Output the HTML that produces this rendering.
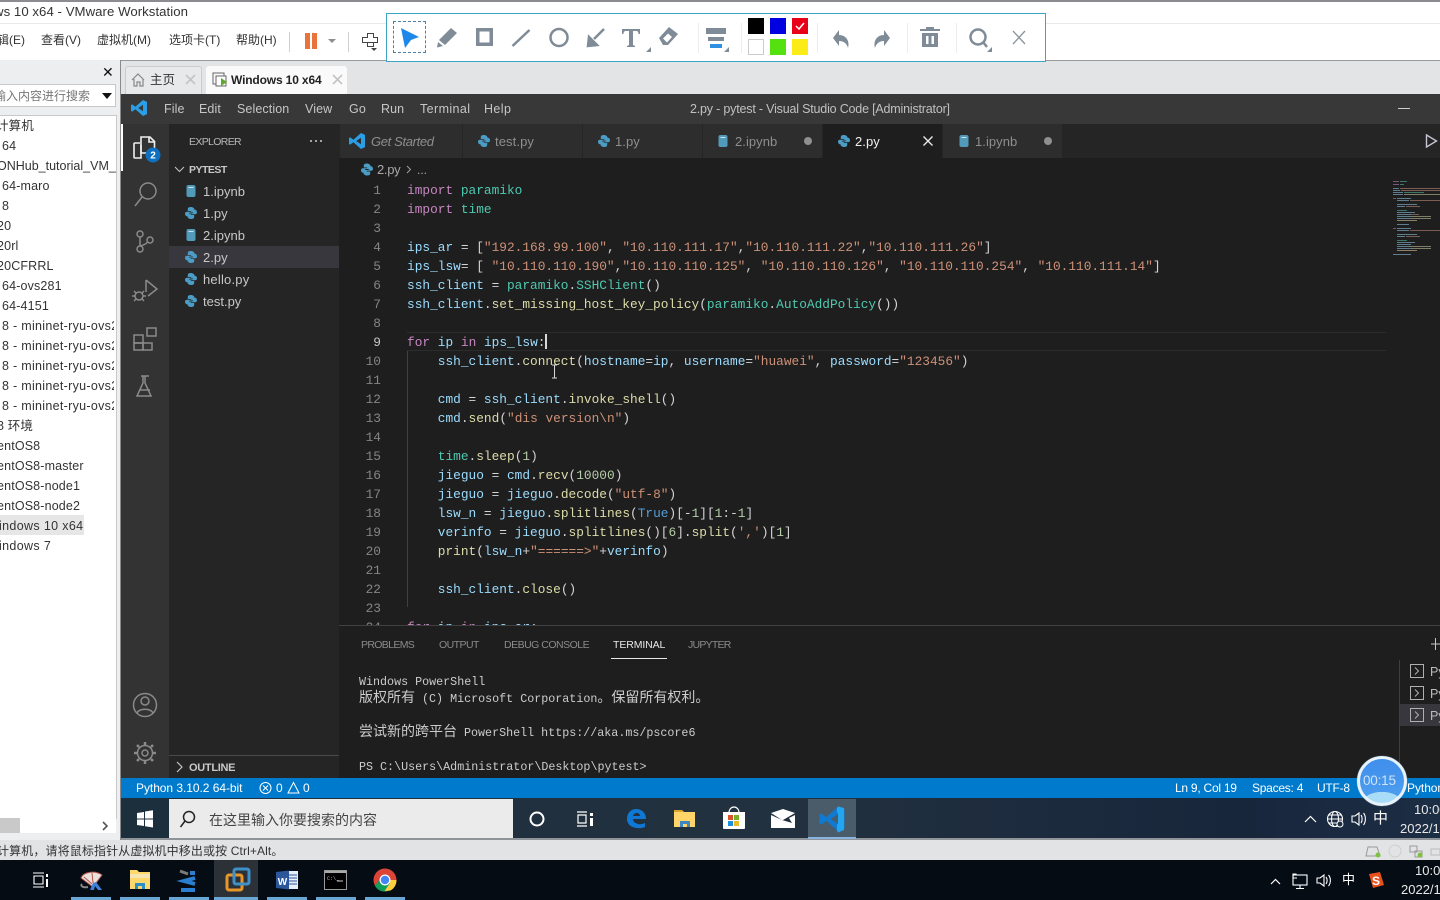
<!DOCTYPE html>
<html lang="zh"><head><meta charset="utf-8"><title>VMware Workstation</title>
<style>
*{box-sizing:border-box}
html,body{margin:0;padding:0;width:1440px;height:900px;overflow:hidden;background:#fff}
body{position:relative;font-family:"Liberation Sans","Noto Sans CJK SC",sans-serif;font-size:13px;color:#222}
.a{position:absolute}
.t{position:absolute;white-space:nowrap;line-height:18px;height:18px}
svg{position:absolute;overflow:visible}
.tree{position:absolute;left:0;top:116px;width:116px;height:702px;background:#fff;overflow:hidden}
.tree div{position:absolute;white-space:nowrap;font-size:12.5px;line-height:20px;height:20px;color:#333;letter-spacing:.15px}
.tree .o{left:2px;width:112px;overflow:hidden;letter-spacing:.3px}
.ex{font-size:13px;color:#c8c8c8;letter-spacing:0}
.tab{position:absolute;top:124px;height:34px;width:119px;background:#2d2d2d}
.tl{position:absolute;top:133px;white-space:nowrap;font-size:13px;line-height:18px;color:#8e8e8e;letter-spacing:.05px}
.menu{position:absolute;top:100px;font-size:12.5px;line-height:18px;color:#c6c6c6;white-space:nowrap;letter-spacing:.1px}
.code{position:absolute;left:340px;top:181px;width:1046px;height:444px;overflow:hidden;font-family:"Liberation Mono",monospace;font-size:12.82px;line-height:19px;color:#d4d4d4}
.code div{position:absolute;left:67px;height:19px;white-space:pre}
.code .l{left:0;width:41px;text-align:right;color:#858585}
.k{color:#c586c0}.v{color:#9cdcfe}.c{color:#4ec9b0}.f{color:#dcdcaa}.s{color:#ce9178}.b{color:#569cd6}.m{color:#b5cea8}
.pt{position:absolute;top:637px;font-size:10.5px;line-height:16px;color:#8b8b8b;white-space:nowrap}
.term{position:absolute;left:359px;font-family:"Liberation Mono","Noto Sans CJK SC",monospace;font-size:11.7px;line-height:17px;height:17px;color:#cccccc;white-space:pre}
.term i{font-style:normal;font-size:14px;font-family:"Noto Sans CJK SC",sans-serif;line-height:17px}
.st{position:absolute;top:780px;font-size:12px;line-height:16px;color:#fff;white-space:nowrap;letter-spacing:-.05px}
.u{position:absolute;top:897px;height:3px;background:#68a6d4}
</style></head><body>

<!-- VMware chrome -->
<div class="a" style="left:0;top:0;width:1440px;height:2px;background:#8c8c90"></div>
<div class="a" style="left:0;top:23px;width:1440px;height:1px;background:#e8e8e8"></div>
<div class="t" style="left:-6px;top:3px;font-size:13.2px;color:#333;letter-spacing:.05px">ws 10 x64 - VMware Workstation</div>
<div class="t" style="left:-3px;top:31px;font-size:12px;color:#333">辑(E)</div>
<div class="t" style="left:41px;top:31px;font-size:12px;color:#333">查看(V)</div>
<div class="t" style="left:97px;top:31px;font-size:12px;color:#333">虚拟机(M)</div>
<div class="t" style="left:169px;top:31px;font-size:12px;color:#333">选项卡(T)</div>
<div class="t" style="left:236px;top:31px;font-size:12px;color:#333">帮助(H)</div>
<div class="a" style="left:289px;top:32px;width:1px;height:20px;background:#d0d0d0"></div>
<div class="a" style="left:305px;top:33px;width:5px;height:16px;background:#e8743b"></div>
<div class="a" style="left:312px;top:33px;width:5px;height:16px;background:#e8743b"></div>
<div class="a" style="left:348px;top:32px;width:1px;height:20px;background:#d0d0d0"></div>
<svg style="left:0;top:0" width="1" height="1"><path d="M328 39h8l-4 4z" fill="#8a8f96"/><path d="M362.500 37.500h5v-4h6v4h4v5h-15zM367.500 42.500v4h6v-4" fill="none" stroke="#444" stroke-width="1"/><path d="M371 48l3 3 3-3z" fill="#444"/></svg>

<!-- left library panel -->
<div class="a" style="left:0;top:60px;width:120px;height:780px;background:#eceeef"></div>
<div class="a" style="left:102px;top:65px;color:#111;font-size:14px;line-height:14px">✕</div>
<div class="a" style="left:0;top:84px;width:116px;height:23px;background:#fff;border:1px solid #c8c8c8;border-left:0"></div>
<div class="t" style="left:-6px;top:87px;font-size:12px;color:#777;width:98px;overflow:hidden">输入内容进行搜索</div>
<svg style="left:0;top:0" width="1" height="1"><path d="M102 93h10l-5 6z" fill="#111"/></svg>
<div class="tree" style="outline:1px solid #c8c8c8">
<div style="left:-4px;top:0">计算机</div>
<div style="left:2px;top:20px">64</div>
<div style="left:-3px;top:40px;letter-spacing:0">ONHub_tutorial_VM_</div>
<div style="left:2px;top:60px">64-maro</div>
<div style="left:2px;top:80px">8</div>
<div style="left:-3px;top:100px">20</div>
<div style="left:-3px;top:120px">20rl</div>
<div style="left:-3px;top:140px">20CFRRL</div>
<div style="left:2px;top:160px">64-ovs281</div>
<div style="left:2px;top:180px">64-4151</div>
<div class="o" style="top:200px">8 - mininet-ryu-ovs2</div>
<div class="o" style="top:220px">8 - mininet-ryu-ovs2</div>
<div class="o" style="top:240px">8 - mininet-ryu-ovs2</div>
<div class="o" style="top:260px">8 - mininet-ryu-ovs2</div>
<div class="o" style="top:280px">8 - mininet-ryu-ovs2</div>
<div style="left:-3px;top:300px">8 环境</div>
<div style="left:-3px;top:320px">entOS8</div>
<div style="left:-3px;top:340px">entOS8-master</div>
<div style="left:-3px;top:360px">entOS8-node1</div>
<div style="left:-3px;top:380px">entOS8-node2</div>
<div style="left:0;top:399px;width:84px;height:20px;background:#e6e6e6"></div>
<div style="left:-1px;top:400px;letter-spacing:.35px">indows 10 x64</div>
<div style="left:-1px;top:420px;letter-spacing:.35px">indows 7</div>
</div>
<div class="a" style="left:0;top:818px;width:116px;height:15px;background:#fff"></div>
<div class="a" style="left:0;top:818px;width:20px;height:15px;background:#c9c9c9"></div>
<svg style="left:0;top:0" width="1" height="1"><path d="M103 822l4 4-4 4" fill="none" stroke="#555" stroke-width="1.6"/></svg>

<!-- gray tabs area -->
<div class="a" style="left:120px;top:60px;width:1320px;height:34px;background:#e2e4e6;border-top:1px solid #9a9a9a"></div>
<div class="a" style="left:120px;top:60px;width:1px;height:780px;background:#8a8a8a"></div>
<div class="a" style="left:125px;top:66px;width:77px;height:28px;background:#e8e9ea;border:1px solid #ccc;border-bottom:0;border-radius:3px 3px 0 0"></div>
<div class="a" style="left:206px;top:66px;width:141px;height:28px;background:#fafafa;border-radius:3px 3px 0 0"></div>
<svg style="left:0;top:0" width="1" height="1"><path d="M132 80l6-6 6 6M134 79v7h3v-4h3v4h3v-7" fill="none" stroke="#888" stroke-width="1.2"/><path d="M186 75l9 9M195 75l-9 9M333 75l9 9M342 75l-9 9" stroke="#c4c4c4" stroke-width="1.6"/><rect x="213" y="73" width="11" height="11" fill="none" stroke="#666"/><rect x="216" y="76" width="10" height="10" fill="#fff" stroke="#666"/><path d="M221 78l6 4-6 4z" fill="#62a82c"/></svg>
<div class="t" style="left:150px;top:71px;font-size:12.5px;color:#333">主页</div>
<div class="t" style="left:231px;top:71px;font-size:12px;font-weight:700;color:#222;letter-spacing:-.15px">Windows 10 x64</div>

<!-- VS Code title -->
<div class="a" style="left:121px;top:94px;width:1319px;height:30px;background:#383838"></div>
<svg style="left:0;top:0" width="1" height="1">
<defs>
<path id="vsp" d="M5-10 -4.500-1.500 -8.500-4.500 -10-3.700V3.700L-8.500 4.500 -4.500 1.500 5 10 10 7.600V-7.600zM5-4 -1 0 5 4z" fill-rule="evenodd"/>
<g id="py"><path id="pyh" d="M-.2-6c-3 0-3 1.500-3 2.500V-2H.2v.7H-4C-5.500-1.300-6 0-6 .2c0 2.200 1 3 2.200 3H-2.500V1.500C-2.500.3-1.500-.5-.5-.5h3C3.500-.5 3.500-1.500 3.500-2V-3.500C3.500-5 1.500-6-.2-6z" fill="#4b9dc6"/><use href="#pyh" transform="rotate(180)"/></g>
<g id="nb"><rect x="-4.500" y="-6" width="9" height="12" rx="2" fill="#519aba"/><path d="M-2.500-3.500h5" stroke="#cfe3ee" stroke-width="1"/></g>
</defs>
<use href="#vsp" transform="translate(139 108) scale(.8)" fill="#2a9fe8"/></svg>
<div class="menu" style="left:164px">File</div><div class="menu" style="left:199px">Edit</div><div class="menu" style="left:237px">Selection</div><div class="menu" style="left:305px">View</div><div class="menu" style="left:349px">Go</div><div class="menu" style="left:381px">Run</div><div class="menu" style="left:420px;letter-spacing:.4px">Terminal</div><div class="menu" style="left:484px;letter-spacing:.4px">Help</div>
<div class="menu" style="left:690px;color:#c0c0c0;letter-spacing:-.19px">2.py - pytest - Visual Studio Code [Administrator]</div>
<div class="a" style="left:1398px;top:108px;width:12px;height:1px;background:#ccc"></div>

<!-- activity bar -->
<div class="a" style="left:121px;top:124px;width:48px;height:654px;background:#333333"></div>
<div class="a" style="left:121px;top:124px;width:2px;height:47px;background:#fff"></div>
<svg style="left:0;top:0" width="1" height="1">
<g fill="none" stroke="#f0f0f0" stroke-width="1.600"><path d="M141 145v13h-6a1 1 0 0 1-1-1v-13a1 1 0 0 1 1-1h5"/><path d="M141 137h9l4.500 4.500V153h-13.500z"/><path d="M149 137v5h5"/></g>
<circle cx="153" cy="155" r="7.500" fill="#0e70c0"/><text x="153" y="158.500" fill="#fff" font-size="10" font-weight="700" text-anchor="middle" font-family="Liberation Sans">2</text>
<g fill="none" stroke="#8a8a8a" stroke-width="1.500">
<circle cx="148" cy="191" r="8"/><path d="M142 197l-7 9"/>
<circle cx="140" cy="234" r="3"/><circle cx="140" cy="249" r="3"/><circle cx="150" cy="240" r="3"/><path d="M140 237v9M147.500 242c-2 3-5 3-7 4"/>
<path d="M146 280v12M146 280l11 9-9 7"/><circle cx="139" cy="296" r="4"/><path d="M132 296h3M143 296h3M134 291l2 2M144 291l-2 2M134 301l2-2M144 301l-2-2"/>
<rect x="134" y="335" width="9" height="8"/><rect x="134" y="343" width="9" height="7"/><rect x="143" y="343" width="9" height="7"/><rect x="147" y="328" width="9" height="8"/>
<path d="M141 376h8M143 376v7l-6 13h14l-6-13v-7M140 390h10"/>
<circle cx="145" cy="705" r="11.500"/><circle cx="145" cy="701" r="4"/><path d="M137 713c2-5 14-5 16 0"/>
<circle cx="145" cy="753" r="3"/><circle cx="145" cy="753" r="7.500"/><path d="M145 742v3M145 761v3M134 753h3M153 753h3M137 745l2 2M151 759l2 2M137 761l2-2M151 747l2-2" stroke-width="2.500"/>
</g></svg>

<!-- sidebar -->
<div class="a" style="left:169px;top:124px;width:170px;height:654px;background:#252526"></div>
<div class="t" style="left:189px;top:133px;font-size:10.5px;color:#b8b8b8;letter-spacing:-.65px">EXPLORER</div>
<svg style="left:0;top:0" width="1" height="1"><g fill="#ccc"><circle cx="311" cy="141" r="1"/><circle cx="316" cy="141" r="1"/><circle cx="321" cy="141" r="1"/></g><path d="M175 167l4.500 4.500L184 167" fill="none" stroke="#c5c5c5" stroke-width="1"/></svg>
<div class="t" style="left:189px;top:161px;font-size:10.5px;font-weight:700;color:#c8c8c8;letter-spacing:-.5px">PYTEST</div>
<div class="a" style="left:169px;top:246px;width:170px;height:22px;background:#37373d"></div>
<svg style="left:0;top:0" width="1" height="1">
<use href="#nb" x="191" y="191"/><use href="#py" x="191" y="213"/><use href="#nb" x="191" y="235"/><use href="#py" x="191" y="257"/><use href="#py" x="191" y="279"/><use href="#py" x="191" y="301"/>
</svg>
<div class="t ex" style="left:203px;top:183px">1.ipynb</div>
<div class="t ex" style="left:203px;top:205px">1.py</div>
<div class="t ex" style="left:203px;top:227px">2.ipynb</div>
<div class="t ex" style="left:203px;top:249px">2.py</div>
<div class="t ex" style="left:203px;top:271px;letter-spacing:.2px">hello.py</div>
<div class="t ex" style="left:203px;top:293px">test.py</div>
<div class="a" style="left:169px;top:755px;width:170px;height:1px;background:#4a4a4a"></div>
<svg style="left:0;top:0" width="1" height="1"><path d="M177 762l5 5-5 5" fill="none" stroke="#c5c5c5" stroke-width="1.200"/></svg>
<div class="t" style="left:189px;top:759px;font-size:11px;font-weight:700;color:#c8c8c8;letter-spacing:-.3px">OUTLINE</div>

<!-- editor -->
<div class="a" style="left:339px;top:124px;width:1101px;height:654px;background:#1e1e1e"></div>
<div class="a" style="left:339px;top:124px;width:1101px;height:34px;background:#252526"></div>
<div class="tab" style="left:340px;width:122px"></div><div class="tab" style="left:463px"></div><div class="tab" style="left:583px"></div><div class="tab" style="left:703px"></div><div class="tab" style="left:823px;background:#1e1e1e"></div><div class="tab" style="left:943px"></div>
<svg style="left:0;top:0" width="1" height="1">
<use href="#vsp" transform="translate(357 141) scale(.8)" fill="#2a9fe8"/>
<use href="#py" x="484" y="141"/><use href="#py" x="604" y="141"/><use href="#nb" x="723" y="141"/><use href="#py" x="844" y="141"/><use href="#nb" x="964" y="141"/>
<circle cx="808" cy="141" r="4" fill="#8f8f8f"/><circle cx="1048" cy="141" r="4" fill="#8f8f8f"/>
<path d="M923.500 136.500l9 9M932.500 136.500l-9 9" stroke="#e8e8e8" stroke-width="1.400"/>
<path d="M1426.500 135v12l10-6z" fill="none" stroke="#c5c5d5" stroke-width="1.400"/>
<use href="#py" x="367" y="169.500"/><path d="M407 166l3.500 3.500-3.500 3.500" fill="none" stroke="#a0a0a0"/>
<path d="M407.500 351v256" stroke="#404040"/>
</svg>
<div class="tl" style="left:371px;font-style:italic;letter-spacing:-.35px">Get Started</div>
<div class="tl" style="left:495px;letter-spacing:.1px">test.py</div>
<div class="tl" style="left:615px">1.py</div>
<div class="tl" style="left:735px;letter-spacing:.05px">2.ipynb</div>
<div class="tl" style="left:855px;color:#f0f0f0">2.py</div>
<div class="tl" style="left:975px;letter-spacing:.05px">1.ipynb</div>
<div class="t" style="left:377px;top:161px;font-size:13px;color:#a8a8a8;letter-spacing:-.3px">2.py</div>
<div class="t" style="left:417px;top:161px;font-size:12px;color:#a8a8a8">...</div>
<div class="a" style="left:407px;top:332px;width:979px;height:19px;border:1px solid #2c2c2c;border-width:1px 0"></div>
<div class="code">
<div class="l" style="top:0">1</div><div style="top:0"><span class="k">import</span> <span class="c">paramiko</span></div>
<div class="l" style="top:19px">2</div><div style="top:19px"><span class="k">import</span> <span class="c">time</span></div>
<div class="l" style="top:38px">3</div>
<div class="l" style="top:57px">4</div><div style="top:57px"><span class="v">ips_ar</span> = [<span class="s">"192.168.99.100"</span>, <span class="s">"10.110.111.17"</span>,<span class="s">"10.110.111.22"</span>,<span class="s">"10.110.111.26"</span>]</div>
<div class="l" style="top:76px">5</div><div style="top:76px"><span class="v">ips_lsw</span>= [ <span class="s">"10.110.110.190"</span>,<span class="s">"10.110.110.125"</span>, <span class="s">"10.110.110.126"</span>, <span class="s">"10.110.110.254"</span>, <span class="s">"10.110.111.14"</span>]</div>
<div class="l" style="top:95px">6</div><div style="top:95px"><span class="v">ssh_client</span> = <span class="c">paramiko</span>.<span class="c">SSHClient</span>()</div>
<div class="l" style="top:114px">7</div><div style="top:114px"><span class="v">ssh_client</span>.<span class="f">set_missing_host_key_policy</span>(<span class="c">paramiko</span>.<span class="c">AutoAddPolicy</span>())</div>
<div class="l" style="top:133px">8</div>
<div class="l" style="top:152px;color:#c6c6c6">9</div><div style="top:152px"><span class="k">for</span> <span class="v">ip</span> <span class="k">in</span> <span class="v">ips_lsw</span>:</div>
<div class="l" style="top:171px">10</div><div style="top:171px">    <span class="v">ssh_client</span>.<span class="f">connect</span>(<span class="v">hostname</span>=<span class="v">ip</span>, <span class="v">username</span>=<span class="s">"huawei"</span>, <span class="v">password</span>=<span class="s">"123456"</span>)</div>
<div class="l" style="top:190px">11</div>
<div class="l" style="top:209px">12</div><div style="top:209px">    <span class="v">cmd</span> = <span class="v">ssh_client</span>.<span class="f">invoke_shell</span>()</div>
<div class="l" style="top:228px">13</div><div style="top:228px">    <span class="v">cmd</span>.<span class="f">send</span>(<span class="s">"dis version\n"</span>)</div>
<div class="l" style="top:247px">14</div>
<div class="l" style="top:266px">15</div><div style="top:266px">    <span class="c">time</span>.<span class="f">sleep</span>(<span class="m">1</span>)</div>
<div class="l" style="top:285px">16</div><div style="top:285px">    <span class="v">jieguo</span> = <span class="v">cmd</span>.<span class="f">recv</span>(<span class="m">10000</span>)</div>
<div class="l" style="top:304px">17</div><div style="top:304px">    <span class="v">jieguo</span> = <span class="v">jieguo</span>.<span class="f">decode</span>(<span class="s">"utf-8"</span>)</div>
<div class="l" style="top:323px">18</div><div style="top:323px">    <span class="v">lsw_n</span> = <span class="v">jieguo</span>.<span class="f">splitlines</span>(<span class="b">True</span>)[-<span class="m">1</span>][<span class="m">1</span>:-<span class="m">1</span>]</div>
<div class="l" style="top:342px">19</div><div style="top:342px">    <span class="v">verinfo</span> = <span class="v">jieguo</span>.<span class="f">splitlines</span>()[<span class="m">6</span>].<span class="f">split</span>(<span class="s">','</span>)[<span class="m">1</span>]</div>
<div class="l" style="top:361px">20</div><div style="top:361px">    <span class="f">print</span>(<span class="v">lsw_n</span>+<span class="s">"======&gt;"</span>+<span class="v">verinfo</span>)</div>
<div class="l" style="top:380px">21</div>
<div class="l" style="top:399px">22</div><div style="top:399px">    <span class="v">ssh_client</span>.<span class="f">close</span>()</div>
<div class="l" style="top:418px">23</div>
<div class="l" style="top:437px">24</div><div style="top:437px"><span class="k">for</span> <span class="v">ip</span> <span class="k">in</span> <span class="v">ips_ar</span>:</div>
</div>
<div class="a" style="left:545px;top:334px;width:2px;height:15px;background:#d8d8d8"></div>
<svg style="left:0;top:0" width="1" height="1"><path d="M552 365h5M552 378h5M554.500 365v13" stroke="#d8d8d8" stroke-width="1"/>
<!-- minimap -->
<g stroke-width="1" opacity=".7">
<path d="M1393 181.500h6" stroke="#9a6f98"/><path d="M1400 181.500h7" stroke="#4c9c88"/>
<path d="M1393 184.500h6" stroke="#9a6f98"/><path d="M1400 184.500h4" stroke="#4c9c88"/>
<path d="M1393 188.500h6" stroke="#7da6bd"/><path d="M1400 188.500h40" stroke="#a5786a"/>
<path d="M1393 190.500h7" stroke="#7da6bd"/><path d="M1401 190.500h39" stroke="#a5786a"/>
<path d="M1393 192.500h10" stroke="#7da6bd"/><path d="M1404 192.500h20" stroke="#4c9c88"/>
<path d="M1393 194.500h10" stroke="#7da6bd"/><path d="M1404 194.500h36" stroke="#a8a888"/>
<path d="M1393 198.500h3" stroke="#9a6f98"/><path d="M1397 198.500h14" stroke="#7da6bd"/>
<path d="M1397 200.500h12" stroke="#7da6bd"/><path d="M1410 200.500h30" stroke="#a5786a"/>
<path d="M1397 204.500h20" stroke="#7da6bd"/><path d="M1397 206.500h8" stroke="#7da6bd"/><path d="M1406 206.500h14" stroke="#a5786a"/>
<path d="M1397 210.500h10" stroke="#4c9c88"/><path d="M1397 212.500h18" stroke="#7da6bd"/><path d="M1397 214.500h14" stroke="#7da6bd"/><path d="M1411 214.500h8" stroke="#a5786a"/>
<path d="M1397 216.500h12" stroke="#7da6bd"/><path d="M1409 216.500h22" stroke="#a8a888"/><path d="M1397 218.500h14" stroke="#7da6bd"/><path d="M1411 218.500h20" stroke="#a8a888"/><path d="M1397 220.500h20" stroke="#b8a888"/>
<path d="M1397 224.500h12" stroke="#7da6bd"/>
<path d="M1393 228.500h3" stroke="#9a6f98"/><path d="M1397 228.500h14" stroke="#7da6bd"/>
<path d="M1397 230.500h12" stroke="#7da6bd"/><path d="M1410 230.500h30" stroke="#a5786a"/>
<path d="M1397 234.500h20" stroke="#7da6bd"/><path d="M1397 236.500h8" stroke="#7da6bd"/><path d="M1406 236.500h14" stroke="#a5786a"/>
<path d="M1397 240.500h10" stroke="#4c9c88"/><path d="M1397 242.500h18" stroke="#7da6bd"/><path d="M1397 244.500h14" stroke="#7da6bd"/>
<path d="M1397 246.500h12" stroke="#7da6bd"/><path d="M1409 246.500h22" stroke="#a8a888"/><path d="M1397 248.500h14" stroke="#7da6bd"/><path d="M1411 248.500h20" stroke="#a8a888"/><path d="M1397 250.500h20" stroke="#b8a888"/>
<path d="M1393 254.500h18" stroke="#7da6bd"/>
</g></svg>

<!-- panel -->
<div class="a" style="left:339px;top:625px;width:1101px;height:153px;background:#1e1e1e;border-top:1px solid #414141"></div>
<div class="pt" style="left:361px;letter-spacing:-.65px">PROBLEMS</div><div class="pt" style="left:439px;letter-spacing:-.55px">OUTPUT</div><div class="pt" style="left:504px;letter-spacing:-.5px">DEBUG CONSOLE</div><div class="pt" style="left:613px;color:#e7e7e7;letter-spacing:-.1px">TERMINAL</div><div class="pt" style="left:688px;letter-spacing:-.75px">JUPYTER</div>
<div class="a" style="left:611px;top:658px;width:56px;height:1px;background:#e7e7e7"></div>
<div class="term" style="top:674px">Windows PowerShell</div>
<div class="term" style="top:689px"><i>版权所有</i> (C) Microsoft Corporation<i>。保留所有权利。</i></div>
<div class="term" style="top:723px"><i>尝试新的跨平台</i> PowerShell https://aka.ms/pscore6</div>
<div class="term" style="top:759px">PS C:\Users\Administrator\Desktop\pytest&gt;</div>
<div class="a" style="left:1399px;top:660px;width:1px;height:118px;background:#3e3e3e"></div>
<div class="a" style="left:1400px;top:704px;width:40px;height:22px;background:#37373d"></div>
<svg style="left:0;top:0" width="1" height="1"><g fill="none" stroke="#b0b0b0"><rect x="1410.500" y="664.500" width="13" height="13"/><path d="M1415 667.500l3.500 3.500-3.500 3.500"/><rect x="1410.500" y="686.500" width="13" height="13"/><path d="M1415 689.500l3.500 3.500-3.500 3.500"/><rect x="1410.500" y="708.500" width="13" height="13"/><path d="M1415 711.500l3.500 3.500-3.500 3.500"/></g><path d="M1431 644h9M1435.500 638v12" stroke="#c5c5c5"/></svg>
<div class="t" style="left:1430px;top:663px;font-size:12.500px;color:#bbb">Py</div>
<div class="t" style="left:1430px;top:685px;font-size:12.500px;color:#bbb">Py</div>
<div class="t" style="left:1430px;top:707px;font-size:12.500px;color:#bbb">Py</div>

<!-- status bar -->
<div class="a" style="left:121px;top:778px;width:1319px;height:20px;background:#007acc"></div>
<div class="st" style="left:136px">Python 3.10.2 64-bit</div>
<svg style="left:0;top:0" width="1" height="1"><g fill="none" stroke="#fff"><circle cx="265.500" cy="788" r="5.500"/><path d="M263 785.500l5 5M268 785.500l-5 5M293.500 782.500l5.500 10.500h-11z"/></g></svg>
<div class="st" style="left:276px">0</div><div class="st" style="left:303px">0</div>
<div class="st" style="left:1175px;letter-spacing:-.25px">Ln 9, Col 19</div><div class="st" style="left:1252px;letter-spacing:-.25px">Spaces: 4</div><div class="st" style="left:1317px;letter-spacing:-.25px">UTF-8</div><div class="st" style="left:1407px">Python</div>

<!-- guest taskbar -->
<div class="a" style="left:121px;top:798px;width:1319px;height:40px;background:linear-gradient(90deg,#1c2f3c,#22313f 50%,#18263c 85%,#1c2e44)"></div>
<div class="a" style="left:121px;top:838px;width:1319px;height:2px;background:#8f9498"></div>
<div class="a" style="left:169px;top:799px;width:344px;height:39px;background:#ebebeb"></div>
<svg style="left:0;top:0" width="1" height="1">
<path d="M137 813l7-1v6.500h-7zM145 811.500l8-1.200v8.200h-8zM137 819.500h7v6.500l-7-1zM145 819.500h8v8l-8-1.200z" fill="#fff"/>
<circle cx="189" cy="817" r="5.500" fill="none" stroke="#222" stroke-width="1.500"/><path d="M185 821l-4.500 6" stroke="#222" stroke-width="1.500"/>
<circle cx="537" cy="819" r="6.500" fill="none" stroke="#fff" stroke-width="2"/>
<path d="M577 812h10M577 826h10M578 815h8v8h-8z" fill="none" stroke="#fff" stroke-width="1.200"/><path d="M590 813h3v3h-3zM590 818h3v8h-3z" fill="#fff"/>
<path d="M627 819c0-6 4-10 9-10 6 0 10 4 10 10h-13c0 4 6 7 12 4v4c-8 3-18 0-18-8zM633 816h7c0-4-6-4-7 0z" fill="#0f78d4" fill-rule="evenodd"/>
<path d="M674 810h8l2 2h11v15h-21z" fill="#ffd469"/><path d="M674 810h8l2 2h-10z" fill="#d9a52b"/><path d="M680 827v-6h10v6h-3v-3h-4v3z" fill="#3f87c2"/>
<path d="M723 812h22v16a1 1 0 0 1-1 1h-20a1 1 0 0 1-1-1z" fill="#fff"/><path d="M729 813c0-8 10-8 10 0" fill="none" stroke="#fff" stroke-width="1.200"/><rect x="728" y="815" width="5" height="5" fill="#d8552a"/><rect x="734" y="815" width="5" height="5" fill="#7bb02c"/><rect x="728" y="821" width="5" height="5" fill="#1d8fd8"/><rect x="734" y="821" width="5" height="5" fill="#e9b92a"/>
<path d="M771 813l12-4 12 4-12 7-1 0zM771 815v13h24v-13l-6 3 3 5-10-3z" fill="#fff"/>
</svg>
<div class="a" style="left:808px;top:799px;width:48px;height:39px;background:#4a5c6a"></div>
<div class="a" style="left:808px;top:837px;width:48px;height:2px;background:#8ab4e0"></div>
<svg style="left:0;top:0" width="1" height="1"><use href="#vsp" transform="translate(832 819) scale(1.250)" fill="#0f7ad0"/><path d="M838 806.500l6 1.500 0 22-6 2.500-1-2v-6.500l1 .5v-12l-1 .5v-5z" fill="#22a6f0"/>
<path d="M1305 822l5.500-5.500 5.500 5.500" fill="none" stroke="#fff" stroke-width="1.200"/>
<g fill="none" stroke="#fff" stroke-width="1.100"><circle cx="1335" cy="819" r="7.500"/><ellipse cx="1335" cy="819" rx="3.500" ry="7.500"/><path d="M1327.500 819h15M1329 815h12M1329 823h12"/>
<path d="M1352 816h3l4-3v12l-4-3h-3zM1361 815c1.500 2 1.500 6 0 8M1363.500 813c2.500 3 2.500 9 0 12"/></g>
<circle cx="1340" cy="824" r="3" fill="#1c2e44" stroke="#fff"/>
</svg>
<div class="t" style="left:209px;top:811px;font-size:14px;color:#444">在这里输入你要搜索的内容</div>
<div class="t" style="left:1373px;top:810px;font-size:15px;color:#fff">中</div>
<div class="t" style="left:1414px;top:801px;font-size:13px;color:#e8e8e8">10:00</div>
<div class="t" style="left:1400px;top:820px;font-size:13px;color:#e8e8e8">2022/1</div>

<!-- timer -->
<div class="a" style="left:1357px;top:756px;width:50px;height:50px;border-radius:50%;border:3px solid #e8f2fb;background:radial-gradient(ellipse 38px 24px at 50% 105%,#a9dcf7 55%,transparent 56%),linear-gradient(#3e8eec,#4f9ff0);box-shadow:0 0 1px #7ab"></div>
<div class="t" style="left:1363px;top:772px;font-size:13.500px;color:#cfe4f5;letter-spacing:-.2px">00:15</div>

<!-- VM status bar -->
<div class="a" style="left:0;top:840px;width:1440px;height:20px;background:#e2e3e4"></div>
<div class="t" style="left:-3px;top:842px;font-size:12px;color:#333;letter-spacing:.12px">计算机，请将鼠标指针从虚拟机中移出或按 Ctrl+Alt。</div>
<svg style="left:0;top:0" width="1" height="1"><g fill="none" stroke="#9a9a9a"><path d="M1366 856l2-9h9l3 9zM1366 856h14"/><circle cx="1395" cy="851" r="6" stroke="#cfcfcf"/><rect x="1410" y="846" width="7" height="6"/><rect x="1415" y="851" width="7" height="6"/><path d="M1431 849h9v6h-9z" stroke="#bbb"/></g><circle cx="1378" cy="855" r="2.500" fill="#7ec040"/><circle cx="1420" cy="855" r="2.500" fill="#7ec040"/></svg>

<!-- host taskbar -->
<div class="a" style="left:0;top:860px;width:1440px;height:40px;background:#050c14"></div>
<div class="a" style="left:214px;top:860px;width:44px;height:40px;background:#2c3138"></div>
<div class="u" style="left:71px;width:40px"></div><div class="u" style="left:120px;width:40px"></div><div class="u" style="left:169px;width:40px"></div><div class="u" style="left:214px;width:44px"></div><div class="u" style="left:267px;width:40px"></div><div class="u" style="left:316px;width:40px"></div><div class="u" style="left:365px;width:40px"></div>
<svg style="left:0;top:0" width="1" height="1">
<path d="M33 873h11M33 887h11M34 876h9v8h-9z" fill="none" stroke="#fff" stroke-width="1.100"/><path d="M46 874h2v3h-2zM46 879h2v8h-2z" fill="#fff"/>
<path d="M81 878c2-6 14-8 21-3l-9 12z" fill="#e9e1dc" stroke="#b5524a"/><path d="M84 877l8 7M92 873l1 10" stroke="#b5524a"/><path d="M93 883l-3 7h4l1-4 3 4h4l-6-8z" fill="#3d82d8"/><path d="M82 884c-2 2 1 4 6 3" stroke="#888" stroke-width="2" fill="none"/>
<path d="M130 870h7l2 2h11v17h-20z" fill="#ffd86b"/><path d="M130 878h20v-4h-20z" fill="#f5e5b0"/><path d="M135 889v-6h10v6h-3v-3h-4v3z" fill="#2d8fc8"/>
<path d="M180 871l8 3" stroke="#7a7a7a" stroke-width="3"/><path d="M190 873h5M195 878l-11 3 11 3M181 890h14" fill="none" stroke="#2a7fd0" stroke-width="4"/>
<rect x="227" y="875" width="15" height="15" rx="2" fill="none" stroke="#e8952a" stroke-width="3"/><rect x="234" y="869" width="15" height="15" rx="2" fill="none" stroke="#3f90c8" stroke-width="3"/>
<path d="M286 871h12v18h-12z" fill="#e8eef8"/><path d="M288 875h9M288 878h9M288 881h9M288 884h9" stroke="#2b579a"/><path d="M276 872l13-1.500v19l-13-1.500z" fill="#2b579a"/><text x="282.500" y="885" fill="#fff" font-size="10" font-weight="700" text-anchor="middle" font-family="Liberation Sans">W</text>
<rect x="324.500" y="870.500" width="22" height="19" fill="#000" stroke="#999"/><path d="M325 871h21v2h-21z" fill="#aaa"/><text x="327" y="880" fill="#bbb" font-size="5" font-family="Liberation Mono">C:\_</text><path d="M337 881h6" stroke="#ccc"/>
<circle cx="385" cy="880" r="11.500" fill="#db4437"/><path d="M385 880l10 5.500a11.500 11.500 0 0 1-10 6 11.500 11.500 0 0 1-10-5.500l5-7z" fill="#0f9d58"/><path d="M385 880h11.500a11.500 11.500 0 0 1-6 10.500l-6 .5 5.500-8z" fill="#ffcd40"/><circle cx="385" cy="880" r="5.500" fill="#fff"/><circle cx="385" cy="880" r="4.200" fill="#4285f4"/>
<path d="M1271 884l4.500-4.500 4.500 4.500" fill="none" stroke="#fff" stroke-width="1.200"/>
<g fill="none" stroke="#fff" stroke-width="1.100"><rect x="1293" y="875" width="14" height="10"/><path d="M1296 875v-1h-3v4h4M1300 885v3M1296 888.500h8"/><path d="M1317 878h3l4-3v11l-4-3h-3zM1326 877c1.500 2 1.500 5 0 7M1328.500 875c2.500 3 2.500 8 0 11"/></g>
<path d="M1369 874l11-2 4 13-11 3z" fill="#e8501e"/><text x="1376" y="885" fill="#fff" font-size="12" font-weight="700" text-anchor="middle" font-family="Liberation Sans">S</text>
</svg>
<div class="t" style="left:1342px;top:871px;font-size:13px;color:#fff">中</div>
<div class="t" style="left:1415px;top:862px;font-size:13px;color:#e8e8e8">10:00</div>
<div class="t" style="left:1401px;top:881px;font-size:13px;color:#e8e8e8">2022/1</div>

<!-- capture toolbar -->
<div class="a" style="left:386px;top:13px;width:660px;height:49px;background:#fff;border:1px solid #3da4c4"></div>
<div class="a" style="left:393px;top:21px;width:33px;height:32px;border:1px dashed #4a7fa8"></div>
<svg style="left:0;top:0" width="1" height="1">
<path d="M401 28l18 9-8 3-6 8z" fill="#1e88ea"/>
<g fill="#7f8b97">
<path d="M451 28l6 5-12 12-6-5zM438 42l5 4-6 1.500z"/>
<path d="M476 28h17v18h-17zM479.500 31.500v11h10v-11z" fill-rule="evenodd"/>
<path d="M659 38l10-11 9 7-10 11-5 0zM663 38.500l4 4 5-5.500-4-3.500z" fill-rule="evenodd"/>
<path d="M622 29h18v5h-1.500c0-2-1-3-2-3H633v14l2 1v1h-8v-1l2-1V31h-3.500c-1 0-2 1-2 3H622z"/>
<path d="M706 28h20v6h-20zM708 37h16v4h-16z"/>
<path d="M833 38l6-8v5c7 0 11 6 9 13-1-4-4-7-9-7v5z"/>
<path d="M890 38l-6-8v5c-7 0-11 6-9 13 1-4 4-7 9-7v5z"/>
<path d="M926 29v-2h8v2h6v2h-20v-2zM922 33h16v14h-16zM926 36v8h2.500v-8zM931.500 36v8h2.500v-8z" fill-rule="evenodd"/>
</g>
<path d="M529.500 30l-17 16" stroke="#7f8b97" stroke-width="2.500"/>
<circle cx="559" cy="37.500" r="8.500" fill="none" stroke="#7f8b97" stroke-width="2.500"/>
<path d="M604 29l-10 10M588 46l1-9 8 8z" fill="#7f8b97" stroke="#7f8b97" stroke-width="2.500"/>
<rect x="710" y="44" width="12" height="4" fill="#2f8fe0"/>
<circle cx="978" cy="37" r="7.500" fill="none" stroke="#7f8b97" stroke-width="2.500"/><path d="M983 42l4 5" stroke="#7f8b97" stroke-width="2.500"/>
<path d="M1013 31l12 13M1025 31l-12 13" stroke="#8a949e" stroke-width="1.300"/>
<path d="M651 47v5h-5zM729 47v5h-5zM992 47v5h-5z" fill="#7f8b97"/>
<g stroke="#ececec"><path d="M698.500 23v30M741.500 23v30M817.500 23v30M907.500 23v30M956.500 23v30"/></g>
<rect x="748" y="18" width="16" height="16" fill="#000"/><rect x="770" y="18" width="16" height="16" fill="#0000e0"/><rect x="792" y="18" width="16" height="16" fill="#e80018"/>
<path d="M796 26l3 3 5-6" fill="none" stroke="#fff" stroke-width="1.500"/>
<rect x="748.500" y="39.500" width="15" height="15" fill="#fff" stroke="#ccc"/><rect x="770" y="39" width="16" height="16" fill="#55e010"/><rect x="792" y="39" width="16" height="16" fill="#fbec18"/>
</svg>
</body></html>
